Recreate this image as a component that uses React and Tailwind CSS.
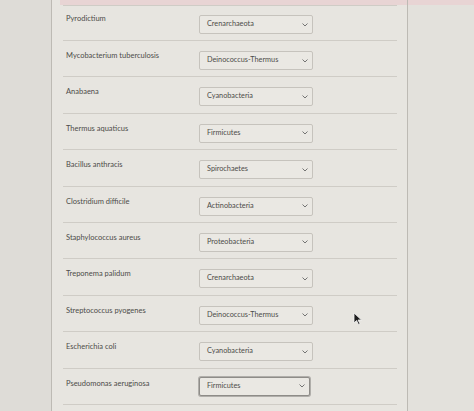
import React from 'react';

const rows = [
  ['Pyrodictium', 'Crenarchaeota'],
  ['Mycobacterium tuberculosis', 'Deinococcus-Thermus'],
  ['Anabaena', 'Cyanobacteria'],
  ['Thermus aquaticus', 'Firmicutes'],
  ['Bacillus anthracis', 'Spirochaetes'],
  ['Clostridium difficile', 'Actinobacteria'],
  ['Staphylococcus aureus', 'Proteobacteria'],
  ['Treponema palidum', 'Crenarchaeota'],
  ['Streptococcus pyogenes', 'Deinococcus-Thermus'],
  ['Escherichia coli', 'Cyanobacteria'],
  ['Pseudomonas aeruginosa', 'Firmicutes'],
];

const Chevron = () => (
  <svg width="6" height="4" viewBox="0 0 6 4" className="shrink-0">
    <path d="M0.5 0.5 L3 3 L5.5 0.5" fill="none" stroke="#666" strokeWidth="0.9" />
  </svg>
);

const Row = ({ name, value, first, focused }) => (
  <div className={`flex shrink-0 border-b border-[#cfccc6] ${first ? 'h-[35px]' : 'h-[36.4px]'}`}>
    <div className={`w-[136px] pl-[3px] text-[7.5px] leading-[11px] text-[#4d4c49] ${first ? 'pt-[7px]' : 'pt-[9px]'}`}>
      {name}
    </div>
    <div
      className={`flex items-center justify-between h-[19px] ${first ? 'mt-[9px]' : focused ? 'mt-[8px]' : 'mt-[10px]'} ${focused ? 'w-[111px]' : 'w-[114px]'} pl-[7px] pr-[4px] rounded-[2px] bg-[#eae8e3] text-[7.3px] text-[#4d4c49] border ${focused ? 'border-[#8e8c88] shadow-[0_0_0_1px_#b0aeaa]' : 'border-[#c6c3bd]'}`}
    >
      <span>{value}</span>
      <Chevron />
    </div>
  </div>
);

const App = () => {
  return (
    <div className="relative flex h-[411px] w-[474px] overflow-hidden bg-[#e6e4df]" style={{ fontFamily: 'Lato, "Open Sans", sans-serif' }}>
      {/* left panel */}
      <div className="w-[52px] shrink-0 border-r border-[#bdbab4] bg-[#dedcd7]" />

      {/* main content */}
      <div className="w-[356px] shrink-0 flex flex-col border-r border-[#bdbab4] bg-[#e7e5e0]">
        <div className="ml-[8px] h-[5px] shrink-0 bg-[#e8d4d4]" />
        <div className="ml-[11px] w-[334px] flex flex-col border-t border-[#cfccc6]">
          {rows.map(([n, v], i) => (
            <Row key={i} name={n} value={v} first={i === 0} focused={i === rows.length - 1} />
          ))}
        </div>
      </div>

      {/* right panel */}
      <div className="flex-1 flex flex-col bg-[#e3e1dc]">
        <div className="h-[5px] shrink-0 bg-[#e8d4d4]" />
      </div>

      {/* mouse cursor */}
      <svg className="absolute left-[353px] top-[312px]" width="9" height="13" viewBox="0 0 9 13">
        <path d="M1 1 L1 11 L3.5 8.5 L5.5 12.5 L7 11.8 L5 8 L8.5 8 Z" fill="#1e1e1e" stroke="#f4f4f4" strokeWidth="0.8" />
      </svg>
    </div>
  );
};

export default App;
